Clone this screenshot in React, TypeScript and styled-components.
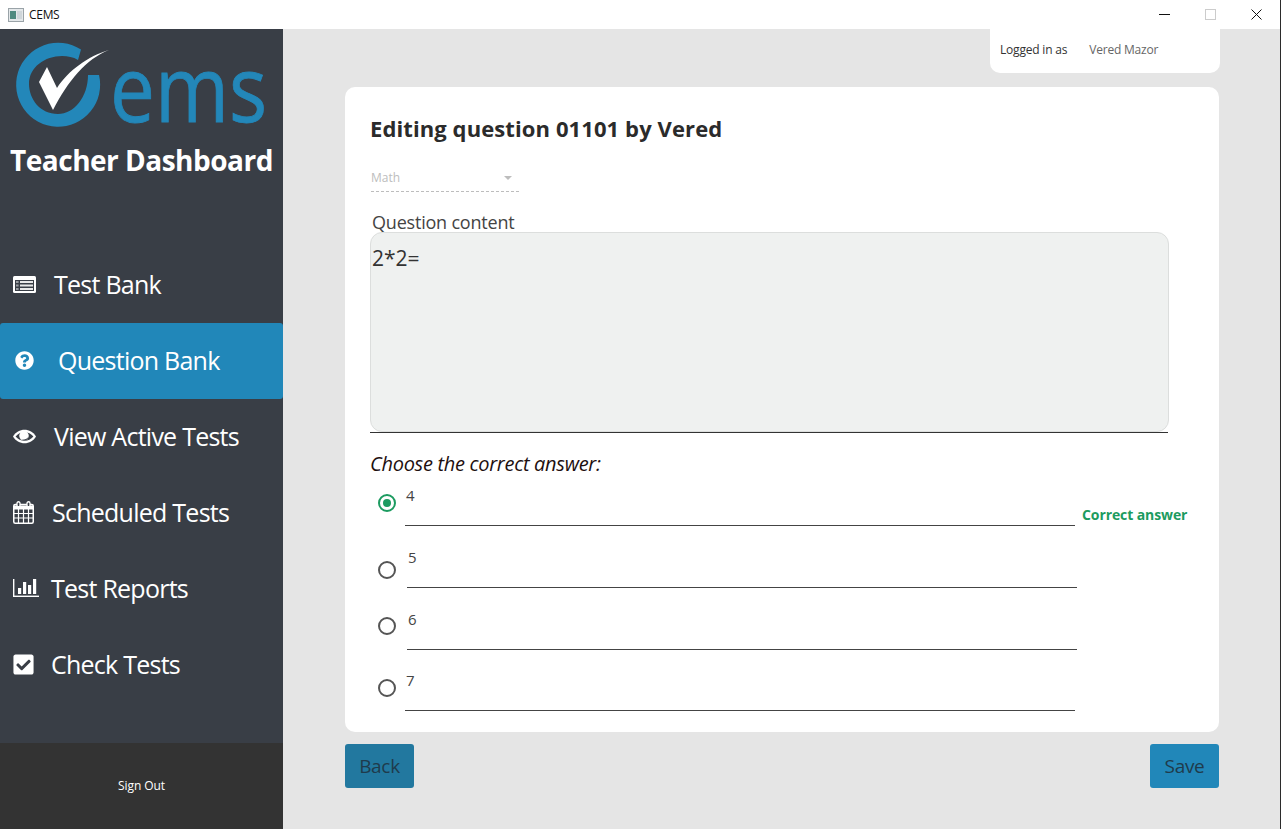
import styled, { createGlobalStyle } from "styled-components";
import { FaCheckSquare, FaQuestionCircle } from "react-icons/fa";
import type { ReactNode } from "react";

const FONT = `"Open Sans", "Noto Sans", sans-serif`;

const GlobalStyle = createGlobalStyle`
  html, body {
    margin: 0;
    padding: 0;
    background: #e5e5e5;
  }
  body {
    font-family: ${FONT};
    overflow: hidden;
  }
`;

const ListIcon = () => (
  <svg width="23" height="17" viewBox="0 0 23 17">
    <rect width="23" height="17" rx="1.5" fill="#fff" />
    <rect x="2" y="4" width="19" height="11" fill="#393e46" />
    <path d="M7 5h13v2H7zM7 8.5h13v2H7zM7 12h13v2H7z" fill="#e8e8e8" />
    <path d="M3 5h2.6v2H3zM3 8.5h2.6v2H3zM3 12h2.6v2H3z" fill="#9a9da2" />
  </svg>
);

const EyeIcon = () => (
  <svg width="23" height="15" viewBox="0 0 23 15">
    <path d="M0 7.5C5 -1.5 18 -1.5 23 7.5C18 16.5 5 16.5 0 7.5Z" fill="#fff" />
    <path d="M2.6 7.5C7 1.8 16 1.8 20.4 7.5C16 13.2 7 13.2 2.6 7.5Z" fill="#393e46" />
    <circle cx="11" cy="6.8" r="4.8" fill="#fff" />
    <path d="M15.6 7.4A4.8 4.8 0 0 1 8 10.6C11 11 14.2 10 15.6 7.4Z" fill="#393e46" />
  </svg>
);

const CalendarIcon = () => (
  <svg width="21" height="23" viewBox="0 0 21 23" fill="none" stroke="#fff">
    <rect x="0.75" y="3.5" width="19.5" height="18.75" rx="1.5" strokeWidth="1.5" />
    <path d="M1 6.5h19" strokeWidth="4" />
    <path d="M1 12.5h19M1 17h19M5.5 8v14M10.5 8v14M15.5 8v14" strokeWidth="1.2" />
    <rect x="4" y="0.75" width="3" height="5" rx="1.5" fill="#393e46" strokeWidth="1.3" />
    <rect x="14" y="0.75" width="3" height="5" rx="1.5" fill="#393e46" strokeWidth="1.3" />
  </svg>
);

const BarsIcon = () => (
  <svg width="26" height="18" viewBox="0 0 26 18" fill="#fff">
    <rect x="0" y="0" width="1.4" height="18" />
    <rect x="0" y="16.6" width="26" height="1.4" />
    <rect x="5" y="9" width="3.2" height="6" />
    <rect x="10" y="3" width="3.2" height="12" />
    <rect x="15" y="6" width="3.2" height="9" />
    <rect x="20" y="0" width="3.2" height="15" />
  </svg>
);

const CemsLogo = () => (
  <LogoSvg viewBox="0 0 283 100" width="283" height="100">
    <path
      d="M81 20.5 A42 42 0 1 0 99 46 L88 46 C88 68 74 85 58 85 C40 85 29 70 29 55 C29 38 45 27 62 27 C68 27 73 28 78 31 Z"
      fill="#2387b9"
    />
    <path
      d="M109 21 C86 30 68 52 53 81 L39 53 L47 38 L57 59 C68 42 88 27 109 21 Z"
      fill="#fff"
    />
    <text
      x="110"
      y="93"
      fill="#2387b9"
      stroke="#2387b9"
      strokeWidth="0.8"
      fontFamily={FONT}
      fontSize="92"
      textLength="157"
      lengthAdjust="spacingAndGlyphs"
    >
      ems
    </text>
  </LogoSvg>
);

type NavEntry = { label: string; icon: ReactNode; gap: number; indent: number; active?: boolean };

const navEntries: NavEntry[] = [
  { label: "Test Bank", icon: <ListIcon />, gap: 18, indent: 13 },
  { label: "Question Bank", icon: <FaQuestionCircle size={19} />, gap: 24, indent: 15, active: true },
  { label: "View Active Tests", icon: <EyeIcon />, gap: 18, indent: 13 },
  { label: "Scheduled Tests", icon: <CalendarIcon />, gap: 18, indent: 13 },
  { label: "Test Reports", icon: <BarsIcon />, gap: 12, indent: 13 },
  { label: "Check Tests", icon: <FaCheckSquare size={23} />, gap: 16, indent: 12 },
];

const answers = [
  { value: "4", radioLift: 14, shift: 0, checked: true },
  { value: "5", radioLift: 9, shift: 2 },
  { value: "6", radioLift: 15, shift: 2 },
  { value: "7", radioLift: 14, shift: 0 },
];

const App = () => {
  return (
    <Screen>
      <GlobalStyle />
      <TitleBar>
        <WindowIcon>
          <svg width="16" height="14" viewBox="0 0 16 14">
            <rect x="0.5" y="0.5" width="15" height="13" fill="#e4e8ea" stroke="#9aa3a8" />
            <rect x="2" y="3" width="6" height="8" fill="#4f8a80" />
            <rect x="9" y="3" width="5" height="8" fill="#cfd6da" />
          </svg>
        </WindowIcon>
        <WindowTitle>CEMS</WindowTitle>
        <WindowControls>
          <WindowButton>
            <svg width="11" height="11" viewBox="0 0 11 11">
              <path d="M0 5.5h11" stroke="#111" strokeWidth="1" />
            </svg>
          </WindowButton>
          <WindowButton>
            <svg width="11" height="11" viewBox="0 0 11 11">
              <rect x="0.5" y="0.5" width="10" height="10" fill="none" stroke="#ccc" />
            </svg>
          </WindowButton>
          <WindowButton>
            <svg width="11" height="11" viewBox="0 0 11 11">
              <path d="M0.5 0.5l10 10M10.5 0.5l-10 10" stroke="#111" strokeWidth="1" />
            </svg>
          </WindowButton>
        </WindowControls>
      </TitleBar>
      <Body>
        <Sidebar>
          <CemsLogo />
          <DashboardTitle>Teacher Dashboard</DashboardTitle>
          <NavList>
            {navEntries.map((entry) => (
              <NavItem key={entry.label} $active={entry.active} $indent={entry.indent} $gap={entry.gap}>
                {entry.icon}
                <span>{entry.label}</span>
              </NavItem>
            ))}
          </NavList>
          <SignOut>Sign Out</SignOut>
        </Sidebar>
        <Main>
          <LoginTab>
            <span>Logged in as</span>
            <LoginName>Vered Mazor</LoginName>
          </LoginTab>
          <Card>
            <CardTitle>Editing question 01101 by Vered</CardTitle>
            <SubjectSelect>
              <span>Math</span>
              <SelectArrow />
            </SubjectSelect>
            <ContentLabel>Question content</ContentLabel>
            <ContentBox>2*2=</ContentBox>
            <ContentRule />
            <ChooseLabel>Choose the correct answer:</ChooseLabel>
            <AnswerList>
              {answers.map((answer) => (
                <AnswerRow key={answer.value}>
                  <Radio $checked={answer.checked} $lift={answer.radioLift} />
                  <AnswerField $shift={answer.shift}>{answer.value}</AnswerField>
                  {answer.checked && <CorrectTag>Correct answer</CorrectTag>}
                </AnswerRow>
              ))}
            </AnswerList>
          </Card>
          <Actions>
            <ActionButton $dim>Back</ActionButton>
            <ActionButton>Save</ActionButton>
          </Actions>
        </Main>
      </Body>
    </Screen>
  );
};

export default App;

const Screen = styled.div`
  width: 1281px;
  height: 829px;
  display: flex;
  flex-direction: column;
  position: relative;
  overflow: hidden;
  background: #e5e5e5;
  border-right: 1px solid #2b2b2b;
  box-sizing: border-box;
`;

const TitleBar = styled.div`
  height: 29px;
  flex: none;
  display: flex;
  align-items: center;
  padding: 0 1px 0 8px;
  background: #fff;
`;

const WindowIcon = styled.div`
  display: flex;
  width: 21px;
`;

const WindowTitle = styled.div`
  font-size: 12px;
  color: #111;
  letter-spacing: -0.3px;
`;

const WindowControls = styled.div`
  margin-left: auto;
  display: flex;
`;

const WindowButton = styled.div`
  width: 46px;
  height: 29px;
  display: flex;
  align-items: center;
  justify-content: center;
`;

const Body = styled.div`
  flex: 1;
  display: flex;
  min-height: 0;
`;

const Sidebar = styled.aside`
  width: 283px;
  flex: none;
  display: flex;
  flex-direction: column;
  background: #393e46;
  color: #fff;
`;

const LogoSvg = styled.svg`
  display: block;
  flex: none;
  overflow: visible;
`;

const DashboardTitle = styled.div`
  margin-top: 13px;
  height: 37px;
  line-height: 36px;
  text-align: center;
  font-size: 28px;
  font-weight: 700;
  letter-spacing: -0.5px;
  white-space: nowrap;
  color: #fff;
`;

const NavList = styled.nav`
  margin-top: 68px;
  display: flex;
  flex-direction: column;
`;

const NavItem = styled.div<{ $active?: boolean; $indent: number; $gap: number }>`
  height: 76px;
  box-sizing: border-box;
  padding-bottom: 2px;
  display: flex;
  align-items: center;
  gap: ${(p) => p.$gap}px;
  padding-left: ${(p) => p.$indent}px;
  font-size: 25px;
  letter-spacing: -0.75px;
  color: #fff;
  border-radius: 3px;
  background: ${(p) => (p.$active ? "#2187b9" : "transparent")};
`;

const SignOut = styled.div`
  margin-top: auto;
  height: 86px;
  box-sizing: border-box;
  padding-bottom: 2px;
  display: flex;
  align-items: center;
  justify-content: center;
  background: #333;
  font-size: 12px;
  letter-spacing: -0.1px;
  color: #fff;
`;

const Main = styled.main`
  flex: 1;
  min-width: 0;
  display: flex;
  flex-direction: column;
  padding: 0 61px 0 62px;
`;

const LoginTab = styled.div`
  width: 230px;
  height: 44px;
  margin-right: -1px;
  margin-bottom: 14px;
  align-self: flex-end;
  flex: none;
  box-sizing: border-box;
  padding: 0 10px 4px;
  display: flex;
  align-items: center;
  gap: 22px;
  background: #fff;
  border-radius: 0 0 10px 10px;
  font-size: 12px;
  letter-spacing: -0.2px;
  color: #333;
`;

const LoginName = styled.span`
  color: #666;
`;

const Card = styled.section`
  height: 645px;
  flex: none;
  box-sizing: border-box;
  padding: 27px 25px 0;
  background: #fff;
  border-radius: 10px;
`;

const CardTitle = styled.h1`
  margin: 0;
  height: 30px;
  line-height: 28px;
  font-size: 22px;
  font-weight: 700;
  color: #2b2b2b;
  letter-spacing: 0.1px;
`;

const SubjectSelect = styled.div`
  margin: 20px 0 0 1px;
  width: 148px;
  height: 28px;
  box-sizing: border-box;
  display: flex;
  align-items: center;
  justify-content: space-between;
  padding-right: 7px;
  border-bottom: 1px dashed #bdbdbd;
  font-size: 12px;
  color: #bdbdbd;
`;

const SelectArrow = styled.i`
  width: 0;
  height: 0;
  border-left: 4.5px solid transparent;
  border-right: 4.5px solid transparent;
  border-top: 4.5px solid #bdbdbd;
`;

const ContentLabel = styled.div`
  margin: 18px 0 0 2px;
  height: 22px;
  line-height: 24px;
  font-size: 18px;
  letter-spacing: -0.2px;
  color: #444;
`;

const ContentBox = styled.div`
  width: 799px;
  height: 200px;
  box-sizing: border-box;
  padding: 10px 1px;
  background: #eff1f0;
  border: 1px solid #dcdedd;
  border-radius: 12px;
  font-size: 21px;
  line-height: 30px;
  color: #333;
`;

const ContentRule = styled.div`
  width: 798px;
  height: 1px;
  background: #333;
`;

const ChooseLabel = styled.div`
  margin-top: 19px;
  height: 24px;
  line-height: 24px;
  font-size: 20px;
  font-style: italic;
  letter-spacing: -0.3px;
  color: #1e1010;
`;

const AnswerList = styled.div`
  display: flex;
  flex-direction: column;
`;

const AnswerRow = styled.div`
  height: 62px;
  display: flex;
  align-items: flex-end;
  position: relative;
  &:first-child {
    height: 50px;
  }
  &:last-child {
    height: 61px;
  }
`;

const Radio = styled.div<{ $checked?: boolean; $lift: number }>`
  width: 18px;
  height: 18px;
  flex: none;
  box-sizing: border-box;
  margin: 0 0 ${(p) => p.$lift}px 8px;
  border-radius: 50%;
  border: 2px solid ${(p) => (p.$checked ? "#1c9b60" : "#555")};
  display: flex;
  align-items: center;
  justify-content: center;
  &::after {
    content: "";
    width: 8px;
    height: 8px;
    border-radius: 50%;
    background: ${(p) => (p.$checked ? "#1c9b60" : "transparent")};
  }
`;

const AnswerField = styled.div<{ $shift: number }>`
  width: 670px;
  height: 41px;
  margin-left: ${(p) => 9 + p.$shift}px;
  box-sizing: border-box;
  padding-left: 1px;
  border-bottom: 1px solid #444;
  font-size: 15px;
  line-height: 20px;
  color: #444;
`;

const CorrectTag = styled.div`
  position: absolute;
  left: 712px;
  bottom: 2px;
  font-size: 14px;
  font-weight: 700;
  letter-spacing: -0.1px;
  white-space: nowrap;
  color: #1c9b60;
`;

const Actions = styled.div`
  margin-top: 12px;
  display: flex;
  justify-content: space-between;
`;

const ActionButton = styled.button<{ $dim?: boolean }>`
  width: 69px;
  height: 44px;
  padding: 0;
  border: none;
  border-radius: 3px;
  font-family: ${FONT};
  font-size: 19px;
  letter-spacing: -0.3px;
  background: ${(p) => (p.$dim ? "#22789f" : "#2187b9")};
  color: #1f3b4c;
`;
